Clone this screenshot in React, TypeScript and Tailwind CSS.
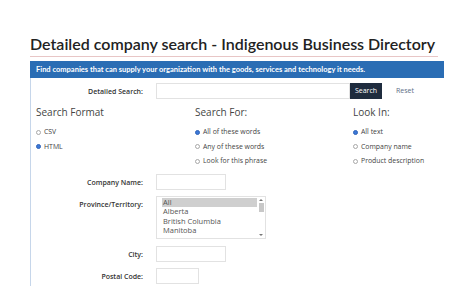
import React from "react";

function Radio({ label, checked }: { label: string; checked?: boolean }) {
  return (
    <div className="flex items-center gap-[3px] h-[14.5px]">
      {checked ? (
        <span className="w-[5px] h-[5px] rounded-full bg-[#3b78d8] border border-[#2f63b8]" />
      ) : (
        <span className="w-[5px] h-[5px] rounded-full border border-[#a8a8a8] bg-white" />
      )}
      <span className="text-[6.9px] text-[#444]">{label}</span>
    </div>
  );
}

function Row({ label, children, className }: { label: string; children: React.ReactNode; className?: string }) {
  return (
    <div className={"flex items-start " + (className ?? "")}>
      <div className="w-[112px] text-right text-[7px] font-semibold text-[#333] pt-[4px]">{label}</div>
      <div className="ml-[13px]">{children}</div>
    </div>
  );
}

const provinces = ["All", "Alberta", "British Columbia", "Manitoba", "New Brunswick"];

export default function App() {
  return (
    <div className="w-[474px] h-[301px] bg-white overflow-hidden pt-[33px] pl-[30px]" style={{ fontFamily: '"Open Sans", sans-serif' }}>
      <h1 className="text-[16px] font-semibold text-[#222] leading-[22px] w-[408px] whitespace-nowrap border-b border-[#e8c6c6] pb-[1px]" style={{ fontFamily: "Lato, sans-serif" }}>
        Detailed company search - Indigenous Business Directory
      </h1>
      <div className="mt-[4px] w-[414px] h-[17px] bg-[#2a6db4] text-white text-[7.5px] font-bold flex items-center pl-[6px] whitespace-nowrap" style={{ fontFamily: "Lato, sans-serif" }}>
        Find companies that can supply your organization with the goods, services and technology it needs.
      </div>

      <div className="border-l border-[#c6d6ea] w-[414px] h-[208px] pt-[5px]">
        <Row label="Detailed Search:">
          <div className="flex items-center">
            <div className="w-[194px] h-[16px] border border-[#e2e2e2]" />
            <div className="w-[32px] h-[16px] bg-[#1f2c3e] text-white text-[7px] flex items-center justify-center">Search</div>
            <div className="ml-[14px] text-[7px] text-[#5b6d86]">Reset</div>
          </div>
        </Row>

        <div className="grid grid-cols-[159px_158px_100px] pl-[5px] mt-[5px]">
          <div>
            <div className="text-[10px] text-[#444] leading-[16px]">Search Format</div>
            <div className="mt-[5px]">
              <Radio label="CSV" />
              <Radio label="HTML" checked />
            </div>
          </div>
          <div>
            <div className="text-[10px] text-[#444] leading-[16px]">Search For:</div>
            <div className="mt-[5px]">
              <Radio label="All of these words" checked />
              <Radio label="Any of these words" />
              <Radio label="Look for this phrase" />
            </div>
          </div>
          <div>
            <div className="text-[10px] text-[#444] leading-[16px]">Look In:</div>
            <div className="mt-[5px]">
              <Radio label="All text" checked />
              <Radio label="Company name" />
              <Radio label="Product description" />
            </div>
          </div>
        </div>

        <Row label="Company Name:" className="mt-[5px]">
          <div className="w-[70px] h-[16px] border border-[#e2e2e2]" />
        </Row>

        <Row label="Province/Territory:" className="mt-[6px]">
          <div className="w-[110px] h-[43px] border border-[#e2e2e2] flex overflow-hidden">
            <div className="flex-1 pl-[5px] pt-[1px]">
              {provinces.map((p, i) => (
                <div key={p} className={"text-[7.5px] leading-[9.5px] text-[#555] pl-[1px] " + (i === 0 ? "bg-[#cfcfcf] text-[#222]" : "")}>
                  {p}
                </div>
              ))}
            </div>
            <div className="w-[8px] flex flex-col items-center py-[2px]">
              <div className="w-0 h-0 border-l-[2px] border-r-[2px] border-b-[2px] border-l-transparent border-r-transparent border-b-[#777]" />
              <div className="w-[5px] h-[9px] bg-[#c8c8c8] mt-[2px]" />
              <div className="flex-1" />
              <div className="w-0 h-0 border-l-[2px] border-r-[2px] border-t-[2px] border-l-transparent border-r-transparent border-t-[#777]" />
            </div>
          </div>
        </Row>

        <Row label="City:" className="mt-[7px]">
          <div className="w-[70px] h-[16px] border border-[#e2e2e2]" />
        </Row>

        <Row label="Postal Code:" className="mt-[6px]">
          <div className="w-[43px] h-[16px] border border-[#e2e2e2]" />
        </Row>
      </div>
    </div>
  );
}
